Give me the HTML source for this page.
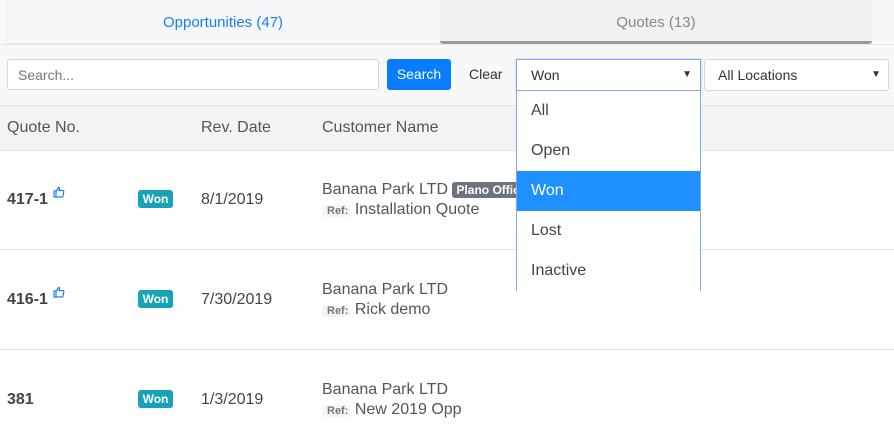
<!DOCTYPE html><html><head><style>
body{margin:0;width:894px;height:434px;overflow:hidden;background:#fff;font-family:"Liberation Sans",sans-serif;color:#444;position:relative}
.a{position:absolute}
</style></head><body>
<div class="a" style="left:0;top:0;width:894px;height:105px;background:#f7f8fa"></div>
<div class="a" style="left:7px;top:0;width:431px;height:44px;border-left:1px solid #eceef0;border-bottom:1px solid #e4e6e8;box-sizing:border-box;color:#1a7ff5;font-size:15px;text-align:center;line-height:45px">Opportunities (47)</div>
<div class="a" style="left:440px;top:0;width:432px;height:44px;background:#f1f1f1;border-bottom:3px solid #999;box-sizing:border-box;border-radius:0 0 3px 3px;color:#888;font-size:15px;text-align:center;line-height:45px">Quotes (13)</div>
<div class="a" style="left:0;top:44px;width:894px;height:1px;background:#e6e8ea"></div>
<div class="a" style="left:7px;top:59px;width:372px;height:31px;background:#fff;border:1px solid #d6d6d6;border-radius:3px;box-sizing:border-box;font-size:14px;color:#777;line-height:30px;padding-left:10px">Search...</div>
<div class="a" style="left:387px;top:59px;width:64px;height:31px;background:#0a7cff;border-radius:3px;color:#fff;font-size:14px;text-align:center;line-height:31px">Search</div>
<div class="a" style="left:469px;top:59px;font-size:14px;color:#333;line-height:31px">Clear</div>
<div class="a" style="left:704px;top:59px;width:185px;height:32px;background:#fff;border:1px solid #d6d6d6;border-radius:3px;box-sizing:border-box;font-size:14px;color:#333;line-height:30px;padding-left:13px">All Locations<span class="a" style="right:7px;top:0;font-size:10px">▼</span></div>
<div class="a" style="left:0;top:105px;width:894px;height:44px;background:#f3f3f3;border-top:1px solid #e2e2e2;border-bottom:1px solid #e2e2e2;font-size:16px;color:#555"><span class="a" style="left:7px;top:13px">Quote No.</span><span class="a" style="left:201px;top:13px">Rev. Date</span><span class="a" style="left:322px;top:13px">Customer Name</span></div>
<div class="a" style="left:0;top:249px;width:894px;height:1px;background:#e2e2e2"></div>
<div class="a" style="left:0;top:349px;width:894px;height:1px;background:#e2e2e2"></div>

<div class="a" style="left:7px;top:191px;font-size:16px;font-weight:bold;color:#444">417-1</div>
<div class="a" style="left:7px;top:291px;font-size:16px;font-weight:bold;color:#444">416-1</div>
<div class="a" style="left:7px;top:391px;font-size:16px;font-weight:bold;color:#444">381</div>
<svg class="a" style="left:53px;top:186px" width="12" height="12" viewBox="0 0 12 12" fill="none" stroke="#1a7ff5" stroke-width="1.2"><rect x="1" y="5" width="2" height="6"/><path d="M3 5.5 L5.5 1.5 Q6.5 1 6.5 2.5 L6 4.5 L10 4.5 Q11 4.5 10.8 5.7 L10 10 Q9.8 11 9 11 L3 11"/></svg>
<svg class="a" style="left:53px;top:286px" width="12" height="12" viewBox="0 0 12 12" fill="none" stroke="#1a7ff5" stroke-width="1.2"><rect x="1" y="5" width="2" height="6"/><path d="M3 5.5 L5.5 1.5 Q6.5 1 6.5 2.5 L6 4.5 L10 4.5 Q11 4.5 10.8 5.7 L10 10 Q9.8 11 9 11 L3 11"/></svg>
<div class="a" style="left:138px;top:190px;width:35px;height:18px;background:#17a2b8;border-radius:3px;color:#fff;font-size:12px;font-weight:bold;text-align:center;line-height:18px">Won</div>
<div class="a" style="left:138px;top:290px;width:35px;height:18px;background:#17a2b8;border-radius:3px;color:#fff;font-size:12px;font-weight:bold;text-align:center;line-height:18px">Won</div>
<div class="a" style="left:138px;top:390px;width:35px;height:18px;background:#17a2b8;border-radius:3px;color:#fff;font-size:12px;font-weight:bold;text-align:center;line-height:18px">Won</div>
<div class="a" style="left:201px;top:191px;font-size:16px">8/1/2019</div>
<div class="a" style="left:201px;top:291px;font-size:16px">7/30/2019</div>
<div class="a" style="left:201px;top:391px;font-size:16px">1/3/2019</div>

<div class="a" style="left:322px;top:180px;font-size:16px;line-height:20px;color:#555;white-space:nowrap">Banana Park LTD <span style="background:#6c757d;color:#fff;font-size:12px;font-weight:bold;padding:1px 4px;border-radius:3px">Plano Office</span><br><span style="font-size:11px;font-weight:bold;color:#777;background:#f5f5f5;padding:0 2px 0 5px">Ref:</span> Installation Quote</div>
<div class="a" style="left:322px;top:280px;font-size:16px;line-height:20px;color:#555">Banana Park LTD<br><span style="font-size:11px;font-weight:bold;color:#777;background:#f5f5f5;padding:0 2px 0 5px">Ref:</span> Rick demo</div>
<div class="a" style="left:322px;top:380px;font-size:16px;line-height:20px;color:#555">Banana Park LTD<br><span style="font-size:11px;font-weight:bold;color:#777;background:#f5f5f5;padding:0 2px 0 5px">Ref:</span> New 2019 Opp</div>

<div class="a" style="left:516px;top:59px;width:185px;height:32px;background:#fff;border:1px solid #7ba8ef;box-shadow:0 0 2px #a9c8f5;box-sizing:border-box;font-size:14px;color:#333;line-height:30px;padding-left:14px">Won<span class="a" style="right:8px;top:0;font-size:10px">▼</span></div>
<div class="a" style="left:516px;top:91px;width:185px;height:200px;background:#fff;border-left:1px solid #7ba8ef;border-right:1px solid #7ba8ef;box-sizing:border-box;font-size:16px;color:#444">
<div style="height:40px;line-height:40px;padding-left:14px">All</div>
<div style="height:40px;line-height:40px;padding-left:14px">Open</div>
<div style="height:40px;line-height:40px;padding-left:14px;background:#1e90ff;color:#fff">Won</div>
<div style="height:40px;line-height:40px;padding-left:14px">Lost</div>
<div style="height:40px;line-height:40px;padding-left:14px">Inactive</div>
</div>
</body></html>
